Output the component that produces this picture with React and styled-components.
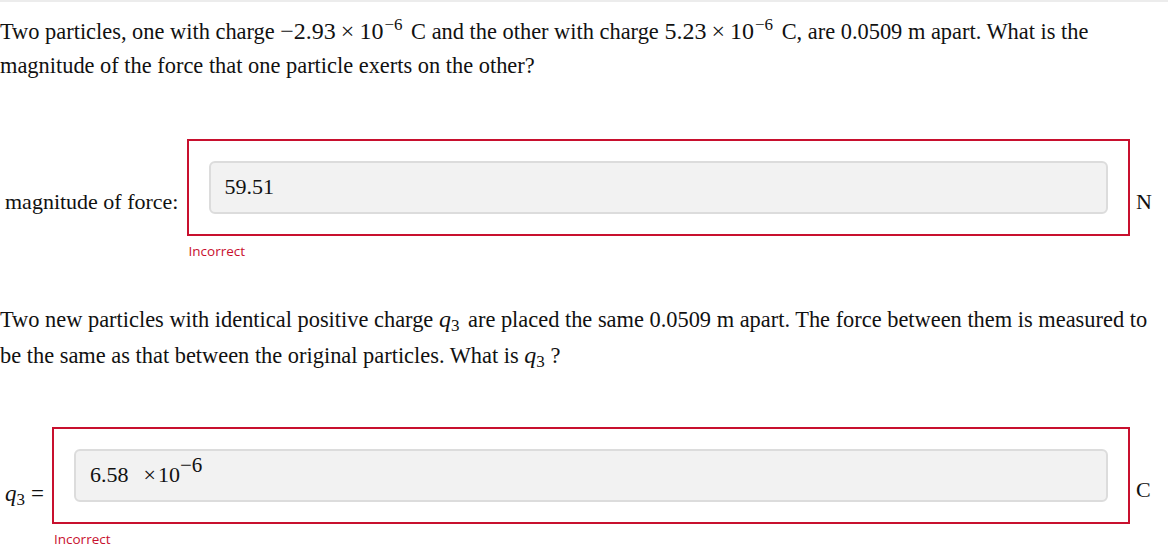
import styled, { createGlobalStyle } from "styled-components";

const GlobalStyle = createGlobalStyle`
  html, body {
    margin: 0;
    padding: 0;
    background: #fff;
  }
  body {
    font-family: "Liberation Serif", "Times New Roman", serif;
    color: #111;
  }
`;

export default function App() {
  const questions = [
    {
      id: "force",
      label: "magnitude of force:",
      value: <span>59.51</span>,
      unit: "N",
      gap: 56,
    },
    {
      id: "q3",
      label: (
        <LabelMath>
          <Var>q</Var>
          <Sub>3</Sub>
          <Equals>=</Equals>
        </LabelMath>
      ),
      value: (
        <span>
          6.58<Times>×</Times>10<InputSup>−6</InputSup>
        </span>
      ),
      unit: "C",
      gap: 53,
    },
  ];

  return (
    <Page>
      <GlobalStyle />
      <Prompt $gap={13}>
        Two particles, one with charge{" "}
        <Math $trail>
          −2.93<Op>×</Op>10<Sup>−6</Sup>
        </Math>{" "}
        C and the other with charge{" "}
        <Math $trail>
          5.23<Op>×</Op>10<Sup>−6</Sup>
        </Math>{" "}
        C, are 0.0509 m apart. What is the magnitude of the force that one
        particle exerts on the other?
      </Prompt>
      <AnswerRow question={questions[0]} />
      <Prompt $gap={43} $loose>
        Two new particles with identical positive charge{" "}
        <Math $trail>
          <Var>q</Var>
          <Sub>3</Sub>
        </Math>{" "}
        are placed the same 0.0509 m apart. The force between them is measured
        to be the same as that between the original particles. What is{" "}
        <Math>
          <Var>q</Var>
          <Sub>3</Sub>
        </Math>{" "}
        ?
      </Prompt>
      <AnswerRow question={questions[1]} />
    </Page>
  );
}

function AnswerRow({ question }) {
  return (
    <Row $gap={question.gap}>
      <Label>{question.label}</Label>
      <Field>
        <AnswerBox>
          <Input>{question.value}</Input>
        </AnswerBox>
        <Feedback>Incorrect</Feedback>
      </Field>
      <Unit>{question.unit}</Unit>
    </Row>
  );
}

const Page = styled.div`
  border-top: 2px solid #ececec;
  padding-bottom: 20px;
  font-family: "Liberation Serif", "Times New Roman", serif;
`;

const Prompt = styled.p`
  margin: ${(p) => p.$gap}px 0 0;
  font-size: 22.4px;
  line-height: ${(p) => (p.$loose ? "36px" : "34px")};
  padding-right: 8px;
`;

const Math = styled.span`
  font-size: 24px;
  line-height: 0;
  white-space: nowrap;
  margin-right: ${(p) => (p.$trail ? "3px" : "0")};
`;

const Op = styled.span`
  margin: 0 5px;
`;

const Var = styled.i`
  font-style: italic;
`;

const Sub = styled.sub`
  font-size: 17px;
  line-height: 0;
  vertical-align: -4px;
`;

const Sup = styled.sup`
  font-size: 17px;
  line-height: 0;
  vertical-align: 9px;
  margin-left: 1px;
`;

const Row = styled.div`
  display: flex;
  align-items: center;
  margin-top: ${(p) => p.$gap}px;
  padding-left: 5px;
`;

const Label = styled.span`
  font-size: 22px;
  line-height: 30px;
  margin-right: 8px;
  margin-top: 6px;
  white-space: nowrap;
`;

const LabelMath = styled.span`
  font-size: 23px;
  display: inline-block;
  margin-top: 8px;
`;

const Equals = styled.span`
  margin-left: 6px;
`;

const Field = styled.div`
  flex: 1;
  display: flex;
  flex-direction: column;
`;

const AnswerBox = styled.div`
  border: 2px solid #c8102e;
  padding: 20px;
`;

const Input = styled.div`
  box-sizing: border-box;
  height: 53px;
  padding: 0 14px;
  background: #f2f2f2;
  border: 2px solid #dcdcdc;
  border-radius: 6px;
  font-family: "Liberation Serif", "Times New Roman", serif;
  font-size: 22px;
  line-height: 47px;
  color: #111;
`;

const Times = styled.span`
  margin: 0 2px 0 15px;
`;

const InputSup = styled.sup`
  font-size: 21px;
  line-height: 0;
  vertical-align: 10px;
`;

const Feedback = styled.div`
  margin-top: 7px;
  padding-left: 2px;
  font-family: "Open Sans", "Noto Sans", sans-serif;
  font-size: 13.5px;
  font-weight: 500;
  line-height: 16px;
  color: #c8102e;
`;

const Unit = styled.span`
  width: 32px;
  padding-left: 6px;
  margin-top: 6px;
  font-size: 22px;
  line-height: 30px;
`;
